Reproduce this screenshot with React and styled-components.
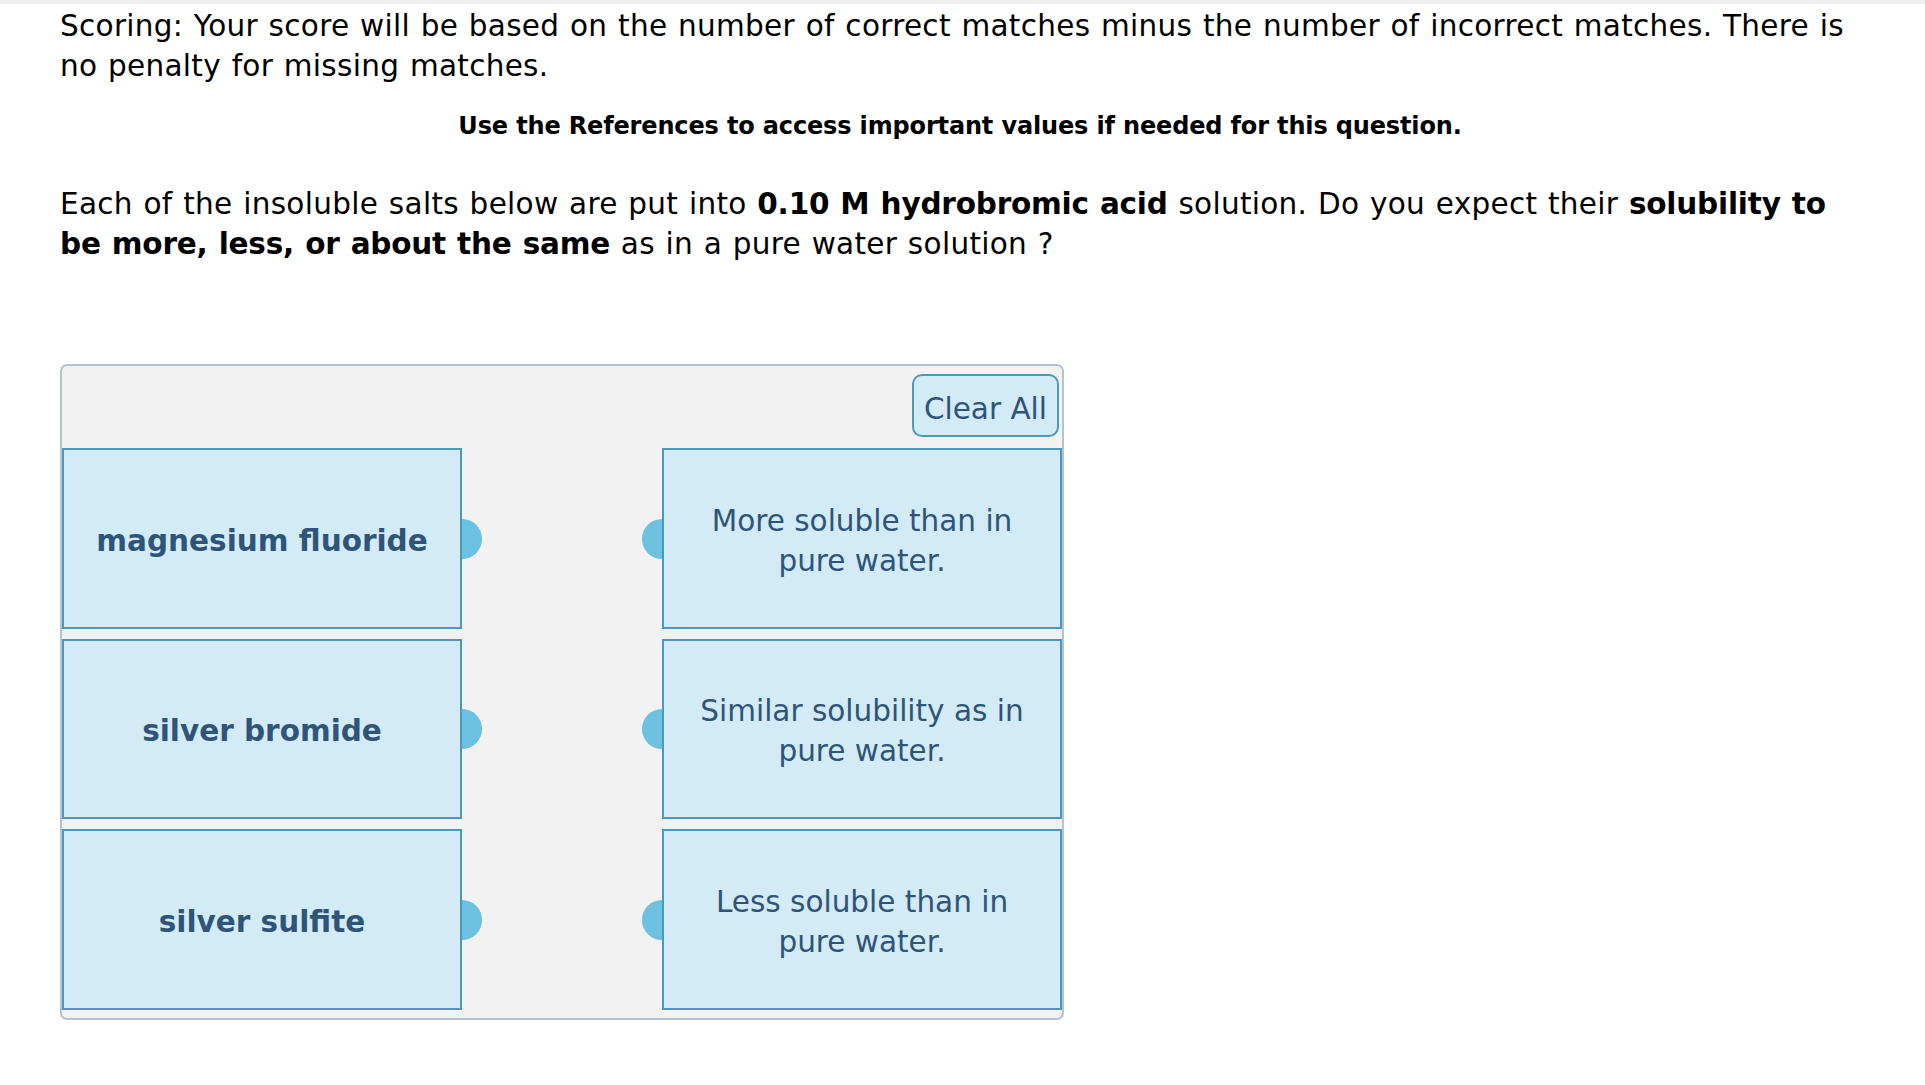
import React from "react";
import styled, { createGlobalStyle } from "styled-components";

const GlobalStyle = createGlobalStyle`
  html, body {
    margin: 0;
    padding: 0;
    background: #ffffff;
  }
  body {
    font-family: "DejaVu Sans", Verdana, sans-serif;
    color: #000000;
  }
`;

const TopStrip = styled.div`
  height: 4px;
  background: #efefef;
`;

const Page = styled.main`
  padding: 3px 65px 40px 60px;
`;

const Text = styled.p`
  margin: 0;
  font-size: 29.5px;
  line-height: 39.5px;
  letter-spacing: 0.3px;
  word-spacing: 1px;
  color: #000;
  b {
    font-weight: 700;
    letter-spacing: -0.2px;
  }
`;

const Notice = styled.p`
  margin: 24.7px 0 0;
  text-align: center;
  font-size: 24px;
  line-height: 30px;
  font-weight: 700;
  letter-spacing: -0.15px;
  color: #000;
`;

const Question = styled(Text)`
  margin-top: 44.8px;
`;

const Panel = styled.section`
  margin-top: 100px;
  width: 1000px;
  border: 2px solid #b6c2ce;
  border-radius: 7px;
  background: #f2f2f2;
  padding: 8px 0 8px;
`;

const Toolbar = styled.div`
  display: flex;
  justify-content: flex-end;
  padding-right: 3px;
  margin-bottom: 11px;
`;

const ClearButton = styled.button`
  height: 63px;
  padding: 7px 10px 0;
  border: 2px solid #4b98bd;
  border-radius: 10px;
  background: #d3ebf7;
  color: #2f5479;
  font-family: "DejaVu Sans", Verdana, sans-serif;
  font-size: 29.5px;
  line-height: 1;
  cursor: pointer;
`;

const Grid = styled.div`
  display: grid;
  grid-template-columns: 400px 1fr 400px;
  row-gap: 10px;
`;

const Card = styled.div`
  position: relative;
  box-sizing: border-box;
  height: 180.5px;
  border: 2px solid #4b98bd;
  background: #d3ebf7;
  color: #2f5479;
  display: flex;
  align-items: center;
  justify-content: center;
  text-align: center;
  padding: 4px 24px 0;
  font-size: 29.5px;
  line-height: 40px;
  font-weight: ${(p) => (p.$bold ? 700 : 400)};
  grid-column: ${(p) => (p.$side === "right" ? 3 : 1)};

  &::after {
    content: "";
    position: absolute;
    top: 50%;
    width: 20px;
    height: 40px;
    margin-top: -20px;
    background: #6cc0e0;
    ${(p) =>
      p.$side === "right"
        ? "left: -22px; border-radius: 20px 0 0 20px;"
        : "right: -22px; border-radius: 0 20px 20px 0;"}
  }
`;

const pairs = [
  ["magnesium fluoride", "More soluble than in pure water."],
  ["silver bromide", "Similar solubility as in pure water."],
  ["silver sulfite", "Less soluble than in pure water."],
];

export default function App() {
  return (
    <>
      <GlobalStyle />
      <TopStrip />
      <Page>
        <Text>
          Scoring: Your score will be based on the number of correct matches
          minus the number of incorrect matches. There is no penalty for missing
          matches.
        </Text>
        <Notice>
          Use the References to access important values if needed for this
          question.
        </Notice>
        <Question>
          Each of the insoluble salts below are put into{" "}
          <b>0.10 M hydrobromic acid</b> solution. Do you expect their{" "}
          <b>solubility to be more, less, or about the same</b> as in a pure
          water solution ?
        </Question>
        <Panel>
          <Toolbar>
            <ClearButton type="button">Clear All</ClearButton>
          </Toolbar>
          <Grid>
            {pairs.map(([salt, answer]) => (
              <React.Fragment key={salt}>
                <Card $bold $side="left">
                  {salt}
                </Card>
                <Card $side="right">{answer}</Card>
              </React.Fragment>
            ))}
          </Grid>
        </Panel>
      </Page>
    </>
  );
}
